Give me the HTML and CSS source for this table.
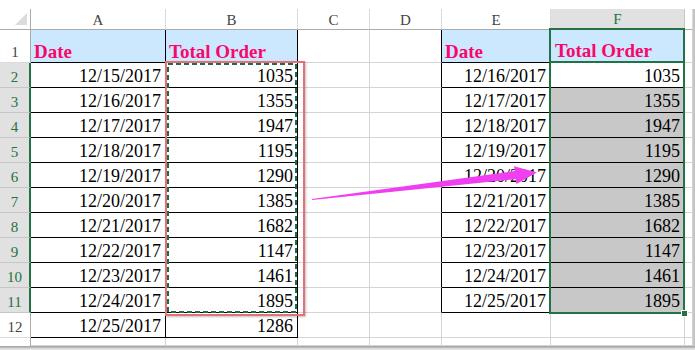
FILE: index.html
```html
<!DOCTYPE html>
<html>
<head>
<meta charset="utf-8">
<link rel="stylesheet" href="styles.css">
</head>
<body>
<div class="sheet">
  <div class="frame">
    <div class="grid">
      <!-- column headers -->
      <div class="corner"></div>
      <div class="ch">A</div>
      <div class="ch">B</div>
      <div class="ch">C</div>
      <div class="ch">D</div>
      <div class="ch">E</div>
      <div class="ch chs">F</div>
      <div class="ch"></div>
      <!-- row 1 -->
      <div class="rh">1</div>
      <div class="c k hd">Date</div>
      <div class="c k hd">Total Order</div>
      <div class="c"></div>
      <div class="c kr"></div>
      <div class="c k hd">Date</div>
      <div class="c k hd f1">Total Order</div>
      <div class="c"></div>
      <!-- row 2 -->
      <div class="rh rhs">2</div>
      <div class="c k">12/15/2017</div>
      <div class="c k">1035</div>
      <div class="c"></div>
      <div class="c kr"></div>
      <div class="c k">12/16/2017</div>
      <div class="c k">1035</div>
      <div class="c"></div>
      <!-- row 3 -->
      <div class="rh rhs">3</div>
      <div class="c k">12/16/2017</div>
      <div class="c k">1355</div>
      <div class="c"></div>
      <div class="c kr"></div>
      <div class="c k">12/17/2017</div>
      <div class="c k g">1355</div>
      <div class="c"></div>
      <!-- row 4 -->
      <div class="rh rhs">4</div>
      <div class="c k">12/17/2017</div>
      <div class="c k">1947</div>
      <div class="c"></div>
      <div class="c kr"></div>
      <div class="c k">12/18/2017</div>
      <div class="c k g">1947</div>
      <div class="c"></div>
      <!-- row 5 -->
      <div class="rh rhs">5</div>
      <div class="c k">12/18/2017</div>
      <div class="c k">1195</div>
      <div class="c"></div>
      <div class="c kr"></div>
      <div class="c k">12/19/2017</div>
      <div class="c k g">1195</div>
      <div class="c"></div>
      <!-- row 6 -->
      <div class="rh rhs">6</div>
      <div class="c k">12/19/2017</div>
      <div class="c k">1290</div>
      <div class="c"></div>
      <div class="c kr"></div>
      <div class="c k">12/20/2017</div>
      <div class="c k g">1290</div>
      <div class="c"></div>
      <!-- row 7 -->
      <div class="rh rhs">7</div>
      <div class="c k">12/20/2017</div>
      <div class="c k">1385</div>
      <div class="c"></div>
      <div class="c kr"></div>
      <div class="c k">12/21/2017</div>
      <div class="c k g">1385</div>
      <div class="c"></div>
      <!-- row 8 -->
      <div class="rh rhs">8</div>
      <div class="c k">12/21/2017</div>
      <div class="c k">1682</div>
      <div class="c"></div>
      <div class="c kr"></div>
      <div class="c k">12/22/2017</div>
      <div class="c k g">1682</div>
      <div class="c"></div>
      <!-- row 9 -->
      <div class="rh rhs">9</div>
      <div class="c k">12/22/2017</div>
      <div class="c k">1147</div>
      <div class="c"></div>
      <div class="c kr"></div>
      <div class="c k">12/23/2017</div>
      <div class="c k g">1147</div>
      <div class="c"></div>
      <!-- row 10 -->
      <div class="rh rhs">10</div>
      <div class="c k">12/23/2017</div>
      <div class="c k">1461</div>
      <div class="c"></div>
      <div class="c kr"></div>
      <div class="c k">12/24/2017</div>
      <div class="c k g">1461</div>
      <div class="c"></div>
      <!-- row 11 -->
      <div class="rh rhs">11</div>
      <div class="c k">12/24/2017</div>
      <div class="c k">1895</div>
      <div class="c"></div>
      <div class="c kr"></div>
      <div class="c k">12/25/2017</div>
      <div class="c k g">1895</div>
      <div class="c"></div>
      <!-- row 12 -->
      <div class="rh">12</div>
      <div class="c k">12/25/2017</div>
      <div class="c k">1286</div>
      <div class="c"></div>
      <div class="c"></div>
      <div class="c"></div>
      <div class="c"></div>
      <div class="c"></div>
      <!-- row 13 (cut) -->
      <div class="rh cut"><span class="cut-in">13</span></div>
      <div class="c"></div>
      <div class="c"></div>
      <div class="c"></div>
      <div class="c"></div>
      <div class="c"></div>
      <div class="c"></div>
      <div class="c"></div>
    </div>
    <div class="edge-r"></div>
  </div>
  <div class="edge-b"></div>

  <div class="copy-box"></div>
  <div class="selection"></div>
  <div class="handle"></div>
  <svg class="overlay" width="695" height="350" viewBox="0 0 695 350">
    <rect x="168" y="64" width="128" height="248" fill="none" stroke="#1f6b42" stroke-width="2" stroke-dasharray="5 3"/>
    <polygon fill="#f03ff0" points="311.9,199 514.7,171.1 514.1,166.2 537,172.5 516.3,184 515.7,179.1 312.1,200"/>
  </svg>
</div>
</body>
</html>
```
FILE: styles.css
```css
html, body {
  margin: 0;
  padding: 0;
  background: #fff;
}
.sheet {
  position: relative;
  width: 695px;
  height: 350px;
  overflow: hidden;
  background: #fff;
  font-family: "Liberation Serif", "Times New Roman", serif;
}
.frame {
  display: flex;
  padding-top: 9px;
}
.grid {
  display: grid;
  grid-template-columns: 31px 135px 132px 72px 72px 109px 134px 8px;
  grid-template-rows: 21px 33px repeat(11, 25px) 8px;
  width: 693px;
}
.edge-r {
  width: 2px;
  background: #c4c4c4;
}
.edge-b {
  height: 4px;
  background: linear-gradient(#a8a8a8 0, #a8a8a8 1px, #cfcfcf 2px, #ececec 4px);
}

/* data cells */
.c {
  box-sizing: border-box;
  border-right: 1px solid #d4d4d4;
  border-bottom: 1px solid #d4d4d4;
  display: flex;
  justify-content: flex-end;
  align-items: flex-end;
  padding: 0 4px 1px 0;
  font-size: 18px;
  line-height: 20px;
  color: #000;
  white-space: nowrap;
  overflow: hidden;
}
.k {
  border-right-color: #000;
  border-bottom-color: #000;
}
.kr {
  border-right-color: #000;
}
.hd {
  background: #cce8ff;
  justify-content: flex-start;
  padding: 0 0 0 3px;
  font-size: 19px;
  font-weight: bold;
  color: #f8086a;
}
.f1 {
  padding-left: 4px;
  border-bottom: 2px solid #217346;
}
.g {
  background: #c8c8c8;
}

/* column headers */
.corner {
  box-sizing: border-box;
  border-right: 1px solid #ababab;
  border-bottom: 1px solid #ababab;
  display: flex;
  justify-content: flex-end;
  align-items: flex-end;
  padding: 0 3px 4px 0;
}
.corner::after {
  content: "";
  width: 12px;
  height: 12px;
  background: #dcdcdc;
  clip-path: polygon(100% 0, 100% 100%, 0 100%);
}
.ch {
  box-sizing: border-box;
  border-right: 1px solid #dadada;
  border-bottom: 1px solid #ababab;
  display: flex;
  justify-content: center;
  align-items: flex-end;
  font-size: 15px;
  line-height: 18px;
  color: #444;
}
.chs {
  background: #e1e1e1;
  border-right-color: #c6c6c6;
  border-bottom: 2px solid #217346;
  color: #217346;
}

/* row headers */
.rh {
  box-sizing: border-box;
  border-right: 1px solid #ababab;
  border-bottom: 1px solid #dadada;
  display: flex;
  justify-content: center;
  align-items: flex-end;
  padding-bottom: 1px;
  font-size: 15px;
  line-height: 18px;
  color: #444;
}
.rhs {
  background: #e1e1e1;
  border-right: 2px solid #217346;
  border-bottom-color: #c6c6c6;
  color: #217346;
}
.cut {
  align-items: flex-start;
  overflow: hidden;
  border-bottom: none;
  padding: 0;
}
.cut-in {
  display: block;
  margin-top: 5px;
}

/* overlays */
.copy-box {
  position: absolute;
  left: 165px;
  top: 61px;
  width: 140px;
  height: 255px;
  box-sizing: border-box;
  border: 2px solid #e4707a;
  box-shadow: 1px 1px 2px rgba(0, 0, 0, 0.25);
}
.selection {
  position: absolute;
  left: 549px;
  top: 28px;
  width: 136px;
  height: 286px;
  box-sizing: border-box;
  border: 2px solid #217346;
}
.handle {
  position: absolute;
  left: 681px;
  top: 310px;
  width: 7px;
  height: 7px;
  box-sizing: border-box;
  border: 1px solid #fff;
  background: #217346;
}
.overlay {
  position: absolute;
  left: 0;
  top: 0;
  pointer-events: none;
}
```
